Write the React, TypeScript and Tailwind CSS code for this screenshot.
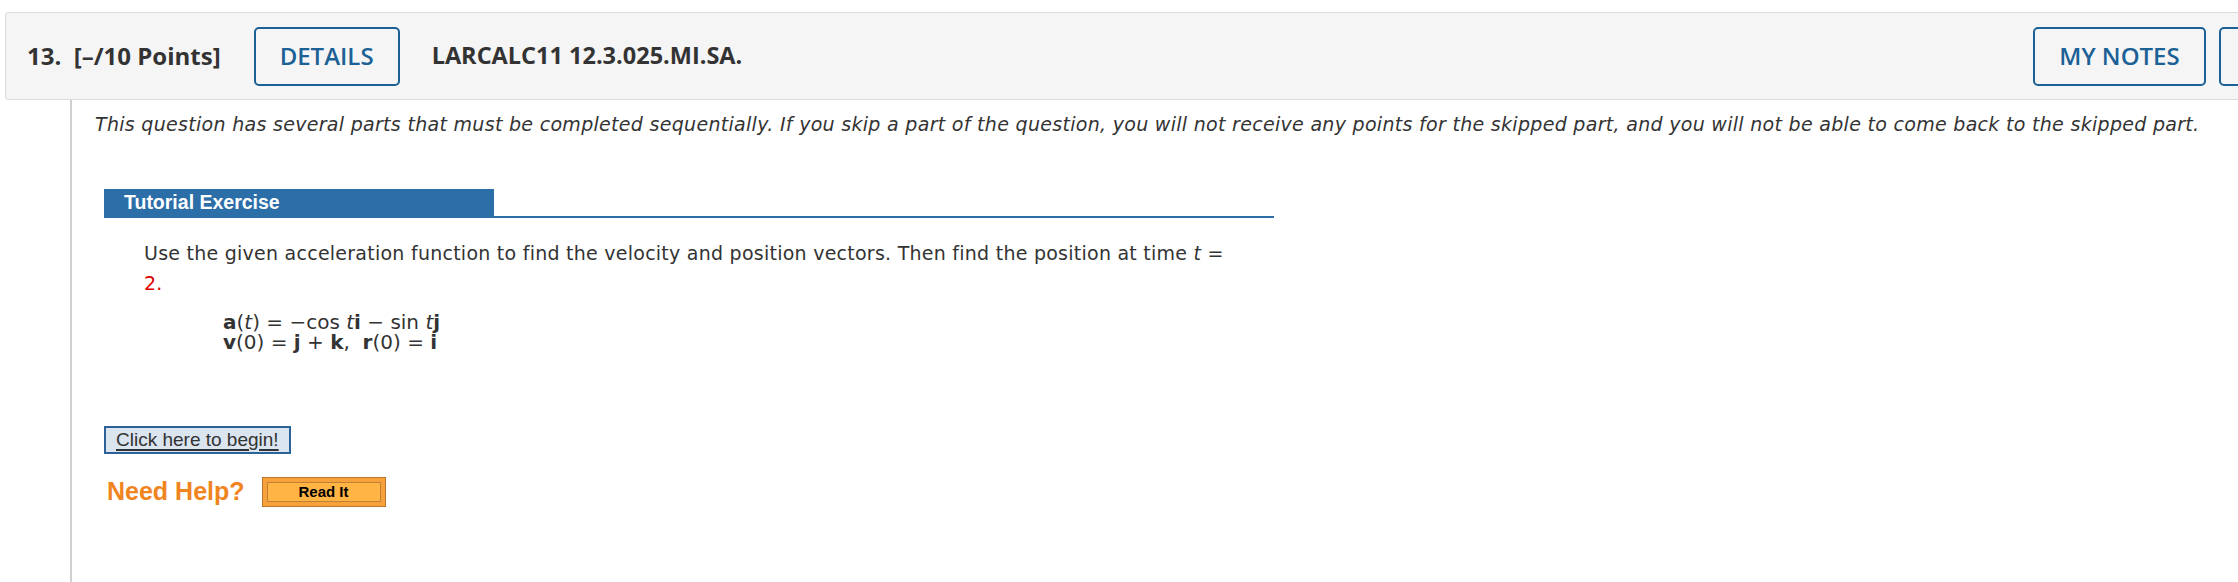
import React from "react";

const openSans = { fontFamily: '"Open Sans", "Liberation Sans", sans-serif' };
const arial = { fontFamily: '"Liberation Sans", Arial, sans-serif' };

const HeaderButton: React.FC<{ label: string; className?: string }> = ({ label, className }) => (
  <button
    className={`h-[59px] rounded-[5px] border-2 border-[#1c6196] text-[#1c6196] text-[24px] font-semibold ${className ?? ""}`}
  >
    {label}
  </button>
);

export default function App() {
  return (
    <div
      className="w-[2238px] h-[582px] overflow-hidden bg-white pt-[12px] pl-[5px] text-[#333]"
      style={{ fontFamily: '"DejaVu Sans", Verdana, sans-serif' }}
    >
      {/* Question header */}
      <header
        className="flex items-center w-[2531px] h-[88px] rounded-[3px] border border-[#dcdcdc] bg-[#f5f5f5] pl-[21px] pr-[16px]"
        style={openSans}
      >
        <span className="text-[24px] font-bold text-[#333] whitespace-pre">13.  [–/10 Points]</span>
        <HeaderButton label="DETAILS" className="ml-[33px] w-[146px]" />
        <span className="ml-[32px] text-[23.5px] font-bold text-[#333]">LARCALC11 12.3.025.MI.SA.</span>
        <div className="flex-1" />
        <HeaderButton label="MY NOTES" className="w-[173px]" />
        <HeaderButton label="ASK YOUR TEACHER" className="ml-[13px] w-[300px] text-left pl-[40px]" />
      </header>

      {/* Question body */}
      <div className="ml-[65px] h-[500px] border-l-2 border-[#d0d0d0] pl-[23px]">
        <p className="pt-[11px] text-[19px] leading-[27px] tracking-[0.3px] italic text-[#333]">
          This question has several parts that must be completed sequentially. If you skip a part of the question, you
          will not receive any points for the skipped part, and you will not be able to come back to the skipped part.
        </p>

        <div className="ml-[9px] mt-[51px]">
          {/* Tutorial header */}
          <div className="w-[1170px] border-b-2 border-[#2b6ea8]">
            <div
              className="w-[390px] h-[27px] bg-[#2b6ea8] pl-[20px] text-[19.5px] font-bold leading-[27px] text-white"
              style={arial}
            >
              Tutorial Exercise
            </div>
          </div>

          <div className="pl-[40px] pt-[20px] text-[19px] leading-[30px] tracking-[0.25px]">
            <p>
              Use the given acceleration function to find the velocity and position vectors. Then find the position at
              time <i>t</i> =
            </p>
            <p className="text-[#e00000]">2.</p>
          </div>

          <div className="pl-[119px] pt-[14px] text-[20px] leading-[20px]">
            <div>
              <b>a</b>(<i>t</i>) = −cos <i>t</i>
              <b>i</b> − sin <i>t</i>
              <b>j</b>
            </div>
            <div>
              <b>v</b>(0) = <b>j</b> + <b>k</b>,&nbsp; <b>r</b>(0) = <b>i</b>
            </div>
          </div>

          <div style={arial}>
            <button className="mt-[74px] h-[28px] border-2 border-[#2b6399] bg-[#dae5f0] px-[10px] text-[19px] leading-[22px] text-[#333] underline decoration-2 underline-offset-[3px]">
              Click here to begin!
            </button>

            <div className="mt-[19px] flex items-center">
              <span className="ml-[3px] text-[25px] font-bold text-[#f0841f]">Need Help?</span>
              <button className="ml-[17px] h-[30px] w-[124px] border border-[#b9772f] bg-[#f7a13a] p-[4px]">
                <div className="flex h-full items-center justify-center border border-[#c08036] bg-[#ffb444] text-[15px] font-bold text-black">
                  Read It
                </div>
              </button>
            </div>
          </div>
        </div>
      </div>
    </div>
  );
}
